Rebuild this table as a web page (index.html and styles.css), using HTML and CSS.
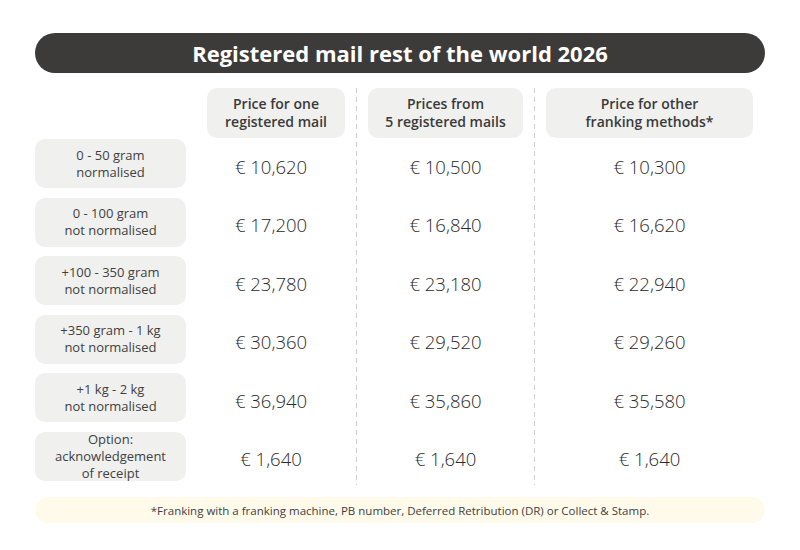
FILE: index.html
```html
<!DOCTYPE html>
<html>
<head>
<meta charset="utf-8">
<link rel="stylesheet" href="styles.css">
</head>
<body>
<div class="page">
  <h1 class="title">Registered mail rest of the world 2026</h1>
  <div class="table">
    <div class="sep sep-a"></div>
    <div class="sep sep-b"></div>

    <div class="head c1">Price for one<br>registered mail</div>
    <div class="head c2">Prices from<br>5 registered mails</div>
    <div class="head c3">Price for other<br>franking methods*</div>

    <div class="label r1">0 - 50 gram<br>normalised</div>
    <div class="val r1 c1">€ 10,620</div>
    <div class="val r1 c2">€ 10,500</div>
    <div class="val r1 c3">€ 10,300</div>

    <div class="label r2">0 - 100 gram<br>not normalised</div>
    <div class="val r2 c1">€ 17,200</div>
    <div class="val r2 c2">€ 16,840</div>
    <div class="val r2 c3">€ 16,620</div>

    <div class="label r3">+100 - 350 gram<br>not normalised</div>
    <div class="val r3 c1">€ 23,780</div>
    <div class="val r3 c2">€ 23,180</div>
    <div class="val r3 c3">€ 22,940</div>

    <div class="label r4">+350 gram - 1 kg<br>not normalised</div>
    <div class="val r4 c1">€ 30,360</div>
    <div class="val r4 c2">€ 29,520</div>
    <div class="val r4 c3">€ 29,260</div>

    <div class="label r5">+1 kg - 2 kg<br>not normalised</div>
    <div class="val r5 c1">€ 36,940</div>
    <div class="val r5 c2">€ 35,860</div>
    <div class="val r5 c3">€ 35,580</div>

    <div class="label r6">Option:<br>acknowledgement<br>of receipt</div>
    <div class="val r6 c1">€ 1,640</div>
    <div class="val r6 c2">€ 1,640</div>
    <div class="val r6 c3">€ 1,640</div>
  </div>
  <div class="footer">*Franking with a franking machine, PB number, Deferred Retribution (DR) or Collect &amp; Stamp.</div>
</div>
</body>
</html>
```
FILE: styles.css
```css
* { box-sizing: border-box; }
html, body { margin: 0; padding: 0; background: #ffffff; }
body {
  font-family: "Open Sans", "Lato", sans-serif;
  color: #3a3a3a;
}
.page {
  width: 800px;
  height: 550px;
  padding: 33px 35px 0 35px;
}
.title {
  margin: 0;
  height: 40px;
  border-radius: 20px;
  background: #3c3b39;
  color: #ffffff;
  font-size: 22px;
  font-weight: 700;
  display: flex;
  align-items: center;
  justify-content: center;
}
.table {
  margin-top: 15px;
  display: grid;
  grid-template-columns: 151px 21px 138px 23px 155px 23px 207px;
  grid-template-rows: 51px repeat(6, 58.6px);
  height: 409px;
}
.sep {
  grid-row: 1 / -1;
  justify-self: center;
  width: 1px;
  height: 397px;
  background: repeating-linear-gradient(to bottom, #cfcfcf 0 5px, transparent 5px 9px);
}
.sep-a { grid-column: 4; }
.sep-b { grid-column: 6; }
.head {
  grid-row: 1;
  height: 50px;
  background: #f0f0ef;
  border-radius: 10px;
  display: flex;
  align-items: center;
  justify-content: center;
  text-align: center;
  font-size: 14px;
  line-height: 18px;
  font-weight: 600;
  color: #3a3a3a;
}
.c1 { grid-column: 3; }
.c2 { grid-column: 5; }
.c3 { grid-column: 7; }
.r1 { grid-row: 2; }
.r2 { grid-row: 3; }
.r3 { grid-row: 4; }
.r4 { grid-row: 5; }
.r5 { grid-row: 6; }
.r6 { grid-row: 7; }
.label {
  grid-column: 1;
  height: 49px;
  background: #f0f0ef;
  border-radius: 10px;
  display: flex;
  align-items: center;
  justify-content: center;
  text-align: center;
  font-size: 13px;
  line-height: 17px;
  color: #3f3f3f;
}
.val {
  height: 49px;
  padding-top: 5px;
  display: flex;
  align-items: center;
  justify-content: center;
  font-size: 18.5px;
  font-weight: 300;
  color: #2a2a2a;
}
.val.c1 { padding-right: 10px; }
.footer {
  height: 26px;
  border-radius: 13px;
  background: #fffaea;
  display: flex;
  align-items: center;
  justify-content: center;
  font-size: 11.5px;
  color: #3f3f3f;
}
```
